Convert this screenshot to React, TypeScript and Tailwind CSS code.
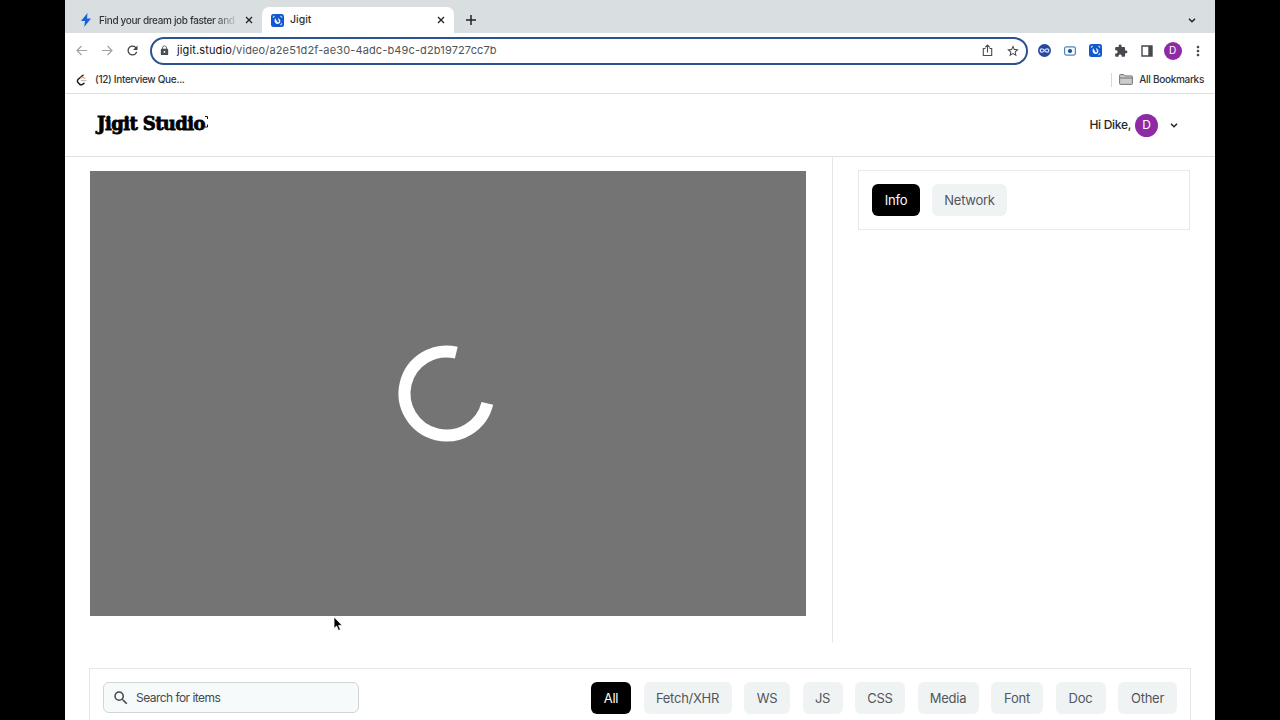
import { MdExtension, MdLock, MdMoreVert, MdRefresh, MdSearch, MdStarBorder } from "react-icons/md";

const filters = [
  { label: "All", width: "w-[40px]", active: true },
  { label: "Fetch/XHR", width: "w-[88px]" },
  { label: "WS", width: "w-[46px]" },
  { label: "JS", width: "w-[40px]" },
  { label: "CSS", width: "w-[50px]" },
  { label: "Media", width: "w-[61px]" },
  { label: "Font", width: "w-[52px]" },
  { label: "Doc", width: "w-[50px]" },
  { label: "Other", width: "w-[59px]" },
];

export default function App() {
  return (
    <div className="flex h-[720px] w-[1280px] justify-center overflow-hidden bg-black font-['Inter',sans-serif]">
      <div className="relative flex h-full w-[1150px] flex-col overflow-hidden bg-white">
        <TabStrip />
        <Toolbar />
        <Bookmarks />
        <Header />

        {/* Player + side panel */}
        <main className="flex h-[486px] shrink-0">
          <section className="w-[768px] border-r border-[#e6e8e8] pl-[25px] pt-[14px]">
            <div className="flex h-[445px] w-[716px] items-center justify-center bg-[#747474]">
              <Spinner />
            </div>
          </section>
          <aside className="pl-[25px] pt-[13px]">
            <div className="flex h-[60px] w-[332px] items-center gap-3 border border-[#e9ebeb] px-[13px]">
              <Chip label="Info" width="w-[48px]" active />
              <Chip label="Network" width="w-[75px]" />
            </div>
          </aside>
        </main>

        {/* Network filters */}
        <div className="ml-[24px] mt-[25px] flex h-[80px] w-[1102px] shrink-0 items-start justify-between border border-[#e3e9e9] px-[13px] pt-[13px]">
          <div className="flex h-[31px] w-[256px] items-center rounded-md border border-[#cfd4d6] bg-[#f7fafb] pl-[8px] text-[#45494d]">
            <MdSearch className="size-[18px]" />
            <span className="ml-[6px] text-[12px] leading-none tracking-[-0.045em]">Search for items</span>
          </div>
          <div className="flex gap-[12.5px]">
            {filters.map((f) => (
              <Chip key={f.label} label={f.label} width={f.width} active={f.active} />
            ))}
          </div>
        </div>

        <svg className="absolute left-[268px] top-[616px] h-[16px] w-[11px]" viewBox="0 0 11 16">
          <path d="M1 1v11.5l2.6-2.4 1.9 4.4 2-.9-1.9-4.2H9.2z" fill="#000" stroke="#fff" strokeWidth=".8" />
        </svg>
      </div>
    </div>
  );
}

function TabStrip() {
  return (
    <div className="flex h-[33px] shrink-0 bg-[#d9dee1] text-[#303336]">
      <div className="flex w-[197px] items-center pl-[15px] pt-[7px]">
        <svg className="h-[14px] w-[12px]" viewBox="0 0 12 14">
          <path d="M7.5 0 1 8h4l-.8 6L11 5.6H7z" fill="#1463d8" />
        </svg>
        <span className="ml-[7px] w-[140px] whitespace-nowrap bg-gradient-to-r from-[#303336] from-82% to-transparent bg-clip-text text-[10px] font-medium tracking-[-0.035em] text-transparent">
          Find your dream job faster and
        </span>
        <CloseIcon className="ml-[6px]" />
      </div>
      <div className="mt-[7px] flex w-[192px] items-center rounded-t-[7px] bg-white pl-[9px]">
        <JigitIcon />
        <span className="ml-[6px] text-[10.5px] font-medium">Jigit</span>
        <CloseIcon className="ml-auto mr-[9px]" />
      </div>
      <div className="flex flex-1 items-center justify-between pl-[12px] pr-[19px] pt-[7px]">
        <svg className="size-[10px]" viewBox="0 0 10 10">
          <path d="M5 0v10M0 5h10" stroke="#222" strokeWidth="1.5" />
        </svg>
        <Chevron />
      </div>
    </div>
  );
}

function Toolbar() {
  return (
    <div className="flex h-[35px] shrink-0 items-center">
      <div className="flex w-[85px] items-center gap-[15px] pl-[11px]">
        <Arrow />
        <Arrow className="rotate-180" />
        <MdRefresh className="-ml-[3px] size-[15px] text-[#444]" />
      </div>
      <div className="flex h-[28px] w-[878px] items-center rounded-full border-2 border-[#2c5290] pl-[7px] pr-[6px]">
        <MdLock className="size-[11px] text-[#4a4d51]" />
        <span className="ml-[7px] whitespace-nowrap text-[11px] tracking-[0.012em] text-[#505356]">
          <span className="text-[#111]">jigit.studio</span>/video/a2e51d2f-ae30-4adc-b49c-d2b19727cc7b
        </span>
        <svg className="ml-auto size-[13px]" viewBox="0 0 13 13" fill="none" stroke="#4a4d51" strokeWidth="1.1">
          <path d="M4.5 4.5H2.3v7h8.4v-7H8.5M6.5 8.5V1.2M4.2 3.3l2.3-2.2 2.3 2.2" />
        </svg>
        <MdStarBorder className="ml-[12px] size-[14px] text-[#3c3f43]" />
      </div>
      <div className="ml-[4px] grid w-[179px] grid-cols-7 place-items-center text-[#46494d]">
        <svg className="size-[13px]" viewBox="0 0 13 13">
          <circle cx="6.5" cy="6.5" r="6.5" fill="#29489c" />
          <path d="M6.5 6.5C5 4.3 2.3 4.2 2.3 6.5s2.7 2.2 4.2 0 4.2-2.3 4.2 0-2.7 2.2-4.2 0z" fill="none" stroke="#d4e3fa" strokeWidth="1.3" />
        </svg>
        <svg className="h-[10px] w-[12px]" viewBox="0 0 12 10">
          <rect x=".6" y=".9" width="10.8" height="8.2" rx="1.5" fill="#f4faff" stroke="#5286bd" strokeWidth="1.2" />
          <circle cx="6" cy="5" r="2.1" fill="#17519a" />
        </svg>
        <JigitIcon />
        <MdExtension className="size-[14px]" />
        <svg className="size-[12px]" viewBox="0 0 12 12">
          <path d="M1 1h10v10H1z" fill="none" stroke="currentColor" strokeWidth="1.4" />
          <path d="M7.3 1H11v10H7.3z" fill="currentColor" />
        </svg>
        <div className="flex size-[18px] items-center justify-center rounded-full bg-[#8e2aa3] text-[10px] text-white">D</div>
        <MdMoreVert className="size-[16px]" />
      </div>
    </div>
  );
}

function Bookmarks() {
  return (
    <div className="flex h-[26px] shrink-0 items-center border-b border-[#dddfe1] pb-[2px] pl-[11px] pr-[11px] text-[10px] font-medium tracking-[-0.03em] text-[#303336]">
      <svg className="mt-px size-[12px]" viewBox="0 0 12 12" fill="none" strokeLinecap="round">
        <path d="M7 1.2 2.2 5.3c-1 .9-1 2.4 0 3.4l1.3 1.4c.9.9 2 .9 3 .2L8 9.3" stroke="#1b1b1b" strokeWidth="1.5" />
        <path d="M5.2 3.6c1.2-.8 2.5-.4 3.4.8" stroke="#e7a06d" strokeWidth="1.3" />
        <path d="M5.3 6.6H10" stroke="#c8c0ba" strokeWidth="1.2" />
      </svg>
      <span className="ml-[7px]">(12) Interview Que...</span>
      <div className="ml-auto h-[14px] w-px bg-[#d4d6d8]" />
      <svg className="ml-[7px] h-[11px] w-[14px]" viewBox="0 0 14 11">
        <path d="M.6 9.7V1.3q0-.7.7-.7h3.5L6 1.9h6.7q.7 0 .7.7v7.1q0 .7-.7.7H1.3q-.7 0-.7-.7zM.6 4h12.8" fill="#c9cbcc" stroke="#676a6d" strokeWidth=".9" />
      </svg>
      <span className="ml-[6px] whitespace-nowrap">All Bookmarks</span>
    </div>
  );
}

function Header() {
  return (
    <header className="flex h-[63px] shrink-0 items-center justify-between border-b border-[#dfe1e2] pl-[32px] pr-[37px]">
      <div className="relative mb-[3px] whitespace-nowrap font-['DejaVu_Serif',serif] text-[18px] font-bold leading-none tracking-[-0.6px] text-black [-webkit-text-stroke:0.8px_black]">
        Jigit Studio
        <svg className="absolute -right-[4px] top-0 h-[14px] w-[8px]" viewBox="0 0 8 14" fill="none" stroke="#111">
          <path d="M4 1.5h2.5V4M6.5 9.5V12H4" />
        </svg>
      </div>
      <div className="flex items-center">
        <span className="text-[12px] font-medium tracking-[-0.025em] text-[#26282b]">Hi Dike,</span>
        <div className="ml-[4px] flex size-[23px] items-center justify-center rounded-full bg-[#8e2aa3] text-[12px] text-white">D</div>
        <Chevron className="ml-[12px]" />
      </div>
    </header>
  );
}

function Chip({ label, width, active }: { label: string; width: string; active?: boolean }) {
  return (
    <button
      className={`flex h-8 shrink-0 items-center justify-center rounded-md pt-px text-[13px] tracking-[-0.02em] ${width} ${
        active ? "bg-black text-white" : "bg-[#f0f3f3] text-[#51565c]"
      }`}
    >
      {label}
    </button>
  );
}

function Spinner() {
  return (
    <svg className="mr-[3px] size-[96px] overflow-visible" viewBox="0 0 96 96">
      <circle
        cx="47.5"
        cy="47.5"
        r="42"
        fill="none"
        stroke="#fff"
        strokeWidth="12"
        pathLength="360"
        strokeDasharray="270 90"
        transform="rotate(13.5 47.5 47.5)"
      />
    </svg>
  );
}

function Arrow({ className = "" }: { className?: string }) {
  return (
    <svg className={`size-[11px] ${className}`} viewBox="0 0 11 11">
      <path d="M11 5.5H1.2M5.5 1 1 5.5 5.5 10" fill="none" stroke="#a0a2a4" strokeWidth="1.2" />
    </svg>
  );
}

function JigitIcon() {
  return (
    <svg className="size-[13px] shrink-0" viewBox="0 0 13 13">
      <rect width="13" height="13" rx="2.5" fill="#1259cf" />
      <path d="M2.3 4V2.3H4M9 2.3h1.7V4M10.7 9v1.7H9" fill="none" stroke="#c5dcfb" strokeWidth=".9" />
      <path d="M4.2 4.2C3 6 3.4 8.8 5.3 9.7 7.5 10.6 9.6 9 9.4 6.9 9.3 5.5 8.3 4.4 6.9 4.2L8.1 7.8 6.8 8.5z" fill="#eaf3ff" />
    </svg>
  );
}

function CloseIcon({ className = "" }: { className?: string }) {
  return (
    <svg className={`size-[8px] shrink-0 ${className}`} viewBox="0 0 8 8">
      <path d="m1 1 6 6M7 1 1 7" stroke="#222" strokeWidth="1.3" />
    </svg>
  );
}

function Chevron({ className = "" }: { className?: string }) {
  return (
    <svg className={`h-[5px] w-[8px] ${className}`} viewBox="0 0 8 5">
      <path d="m1 .8 3 3 3-3" fill="none" stroke="#222" strokeWidth="1.5" />
    </svg>
  );
}
